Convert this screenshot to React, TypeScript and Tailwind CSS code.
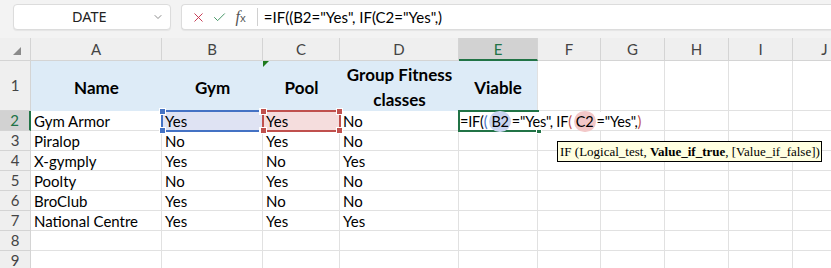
import { ChevronDown, X, Check } from "lucide-react";

const cell = "font-['Lato','Noto_Sans',sans-serif]";

const cols = [
  { k: "A", w: "w-[131px]" },
  { k: "B", w: "w-[101px]" },
  { k: "C", w: "w-[77px]" },
  { k: "D", w: "w-[119px]" },
  { k: "E", w: "w-[79px]" },
  { k: "F", w: "w-[63px]" },
  { k: "G", w: "w-[64px]" },
  { k: "H", w: "w-[64px]" },
  { k: "I", w: "w-[64px]" },
  { k: "J", w: "w-[64px]" },
];

const rows: string[][] = [
  ["Gym Armor", "Yes", "Yes", "No", ""],
  ["Piralop", "No", "Yes", "No", ""],
  ["X-gymply", "Yes", "No", "Yes", ""],
  ["Poolty", "No", "Yes", "No", ""],
  ["BroClub", "Yes", "No", "No", ""],
  ["National Centre", "Yes", "Yes", "Yes", ""],
  [],
  [],
  [],
];

const headers = ["Name", "Gym", "Pool", "Group Fitness classes", "Viable"];

const Handle = ({ pos, color }: { pos: string; color: string }) => (
  <span className={`absolute h-[7px] w-[7px] border border-white ${pos} ${color}`} />
);

const TopBar = () => (
  <div className="flex h-[38px] items-start bg-[#f3f3f3] pt-1">
    <div className="ml-[13px] flex h-[26px] w-[161px] items-center rounded-[4px] border border-[#dcdcdc] bg-white shadow-[0_1px_1px_rgba(0,0,0,0.06)]">
      <span className="flex-1 pl-[12px] text-center text-[14.5px] text-[#222] font-['Noto_Sans',sans-serif]">
        DATE
      </span>
      <ChevronDown className="mr-[6px] h-[12px] w-[12px] text-[#666]" strokeWidth={1.5} />
    </div>
    <div className="ml-[10px] flex h-[26px] w-[660px] items-center rounded-l-[4px] border border-r-0 border-[#dcdcdc] bg-white shadow-[0_1px_1px_rgba(0,0,0,0.06)]">
      <X className="ml-[9px] h-[15px] w-[15px] text-[#c4314b]" strokeWidth={1.5} />
      <Check className="ml-[6px] h-[15px] w-[15px] text-[#3a8f5c]" strokeWidth={1.5} />
      <span className="ml-[8px] font-['Liberation_Serif',serif] text-[16px] italic text-[#555]">
        f<span className="text-[11px] not-italic font-['Noto_Sans',sans-serif]">x</span>
      </span>
      <span className="ml-[11px] h-[18px] w-px bg-[#d0d0d0]" />
      <span className={`ml-[6px] text-[15px] text-black ${cell}`}>=IF((B2="Yes", IF(C2="Yes",)</span>
    </div>
  </div>
);

const ColumnHeaders = () => (
  <div className="flex h-[23px] bg-[#efefef]">
    <div className="relative w-[31px] shrink-0 border-r border-b border-[#d4d4d4]">
      <svg className="absolute left-[13px] top-[9px]" width="8" height="8" viewBox="0 0 8 8">
        <path d="M8 0 L8 8 L0 8 Z" fill="#8a8a8a" />
      </svg>
    </div>
    {cols.map((c) => (
      <div
        key={c.k}
        className={`${c.w} flex shrink-0 items-center justify-center text-[15px] ${cell} ${
          c.k === "E"
            ? "border-b-2 border-r border-b-[#217346] border-r-[#d4d4d4] bg-[#d2d2d2] pt-[1px] text-[#217346]"
            : "border-r border-b border-[#d4d4d4] text-[#444]"
        }`}
      >
        {c.k}
      </div>
    ))}
  </div>
);

const RowHeader = ({ n, tall }: { n: number; tall?: boolean }) => (
  <div
    className={`flex w-[31px] shrink-0 items-center justify-center text-[15px] ${cell} ${
      tall ? "h-[50px]" : "h-[20px]"
    } ${
      n === 2
        ? "border-b border-r-2 border-b-[#d4d4d4] border-r-[#217346] bg-[#d2d2d2] text-[#217346]"
        : "border-r border-b border-[#d4d4d4] bg-[#efefef] text-[#444]"
    }`}
  >
    {n}
  </div>
);

export default function App() {
  return (
    <div className="relative h-[268px] w-[831px] overflow-hidden bg-white">
      <TopBar />
      <div className="relative">
        <ColumnHeaders />
        <div className="flex">
          <RowHeader n={1} tall />
          {cols.map((c, i) =>
            i < 5 ? (
              <div
                key={c.k}
                className={`${c.w} relative flex h-[50px] shrink-0 items-center justify-center bg-[#ddebf7] px-[2px] pt-[2px] text-center text-[17px] font-bold leading-[25px] text-black ${cell} ${
                  i === 4 ? "border-r border-[#e1e1e1]" : ""
                }`}
              >
                {i === 2 && (
                  <svg className="absolute left-0 top-0" width="6" height="6" viewBox="0 0 6 6">
                    <path d="M0 0 L6 0 L0 6 Z" fill="#1e7a1e" />
                  </svg>
                )}
                {headers[i]}
              </div>
            ) : (
              <div key={c.k} className={`${c.w} h-[50px] shrink-0 border-r border-b border-[#e1e1e1]`} />
            )
          )}
        </div>
        {rows.map((r, ri) => (
          <div key={ri} className="flex">
            <RowHeader n={ri + 2} />
            {cols.map((c, ci) => (
              <div
                key={c.k}
                className={`${c.w} flex h-[20px] shrink-0 items-center whitespace-nowrap border-r border-b border-[#e1e1e1] pl-[3px] pt-[1px] text-[15px] text-black ${cell} ${
                  ri === 0 && ci === 1 ? "bg-[#dfe3f3]" : ""
                } ${ri === 0 && ci === 2 ? "bg-[#f5dddd]" : ""}`}
              >
                {r[ci] ?? ""}
              </div>
            ))}
          </div>
        ))}

        {/* reference highlight B2 */}
        <div className="absolute left-[161px] top-[72px] h-[22px] w-[103px] border-2 border-[#4472c4]">
          <Handle pos="-left-[4px] -top-[4px]" color="bg-[#4472c4]" />
          <Handle pos="-right-[4px] -top-[4px]" color="bg-[#4472c4]" />
          <Handle pos="-left-[4px] -bottom-[4px]" color="bg-[#4472c4]" />
          <Handle pos="-right-[4px] -bottom-[4px]" color="bg-[#4472c4]" />
        </div>
        {/* reference highlight C2 */}
        <div className="absolute left-[262px] top-[72px] h-[22px] w-[79px] border-2 border-[#c0504d]">
          <Handle pos="-left-[4px] -top-[4px]" color="bg-[#c0504d]" />
          <Handle pos="-right-[4px] -top-[4px]" color="bg-[#c0504d]" />
          <Handle pos="-left-[4px] -bottom-[4px]" color="bg-[#c0504d]" />
          <Handle pos="-right-[4px] -bottom-[4px]" color="bg-[#c0504d]" />
        </div>

        {/* E2 in edit mode */}
        <div className="absolute left-[458px] top-[72px] h-[22px] w-[81px] border-y-2 border-l-2 border-[#217346]">
          <span className="absolute -bottom-[4px] -right-[3px] h-[6px] w-[6px] border border-white bg-[#217346]" />
        </div>
        <div
          className={`absolute left-[460px] top-[74px] flex h-[18px] items-center whitespace-nowrap bg-white pr-[2px] pt-[1px] text-[14.5px] tracking-[-0.2px] text-black ${cell}`}
        >
          <span>=IF(</span>
          <span className="text-[#4472c4]">(</span>
          <span className="ml-[2px] mr-[1px] rounded-full bg-[#c9d4f0] px-[2px]">B2</span>
          <span>="Yes", IF</span>
          <span className="text-[#c0504d]">(</span>
          <span className="ml-[2px] mr-[1px] rounded-full bg-[#f2c8c8] px-[2px]">C2</span>
          <span>="Yes",</span>
          <span className="text-[#c0504d]">)</span>
        </div>

        {/* function tooltip */}
        <div className="absolute left-[557px] top-[103px] flex h-[21px] w-[265px] items-center whitespace-nowrap border border-black bg-[#ffffe1] pl-[2px] font-['Liberation_Serif',serif] text-[13px] text-black">
          IF (Logical_test,&nbsp;<b>Value_if_true</b>, [Value_if_false])
        </div>
      </div>
    </div>
  );
}
